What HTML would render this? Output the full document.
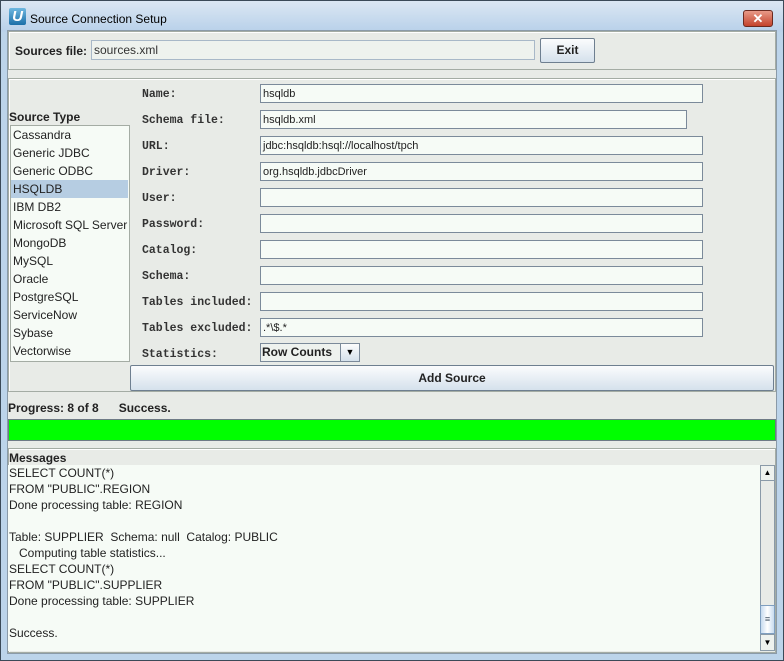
<!DOCTYPE html>
<html><head><style>
*{margin:0;padding:0;box-sizing:border-box}
body{width:784px;height:661px;position:relative;overflow:hidden;background:#bcd4ea;font-family:"Liberation Sans",sans-serif;font-size:12px;color:#000}
.a{position:absolute}
.frame{left:0;top:0;width:784px;height:661px;border:1px solid #3b4a58;background:linear-gradient(#dbe7f3,#b9d1ea 30px,#bcd4ea 31px)}
.content{left:7px;top:30px;width:770px;height:624px;background:#e8ebe7;border:1px solid #8a9aa8}
.lbl{font-family:"Liberation Mono","DejaVu Sans Mono",monospace;font-weight:bold;font-size:11.5px;color:#333}
.fld{background:#f6fbf6;border:1px solid #7b8a9a;height:19px;font-size:11px;padding-left:2px;line-height:18px;color:#222}
.grp{border:1px solid #a4aca4;box-shadow:inset 1px 1px #fff}
.btn{border:1px solid #6e7f90;border-radius:2px;background:linear-gradient(#fbfcfd,#d5e1ec);font-weight:bold;text-align:center;color:#222}
.li{left:13px;font-size:12px;color:#222;height:18px;line-height:19px}
.msg{left:9px;font-size:12px;color:#222}
</style></head><body>
<div class="a frame"></div>
<div class="a" style="left:9px;top:8px;width:17px;height:17px;background:linear-gradient(#6fb8e0,#1b6fa8);border-radius:2px;color:#fff;font-weight:bold;font-style:italic;font-size:15px;line-height:17px;text-align:center">U</div>
<div class="a" style="left:30px;top:12px;font-size:12px">Source Connection Setup</div>
<div class="a" style="left:743px;top:10px;width:30px;height:17px;border:1px solid #6b2a20;border-radius:3px;background:linear-gradient(#e89a88,#c4432c);color:#fff;font-weight:bold;text-align:center;line-height:15px;font-size:13px">✕</div>
<div class="a content"></div>
<div class="a grp" style="left:8px;top:31px;width:768px;height:39px"></div>
<div class="a" style="left:15px;top:44px;font-weight:bold;color:#222">Sources file:</div>
<div class="a fld" style="left:91px;top:40px;width:444px;height:20px;font-size:12px;background:#eef2ee;border-color:#a8b8c8;color:#333;line-height:19px">sources.xml</div>
<div class="a btn" style="left:540px;top:38px;width:55px;height:25px;line-height:23px">Exit</div>
<div class="a grp" style="left:8px;top:78px;width:768px;height:314px"></div>
<div class="a" style="left:9px;top:110px;font-weight:bold;color:#222">Source Type</div>
<div class="a" style="left:10px;top:125px;width:120px;height:237px;background:#f6fbf6;border:1px solid #a4aca4"></div>
<div class="a" style="left:11px;top:180px;width:117px;height:18px;background:#b6cde2"></div>
<div class="a li" style="top:126px">Cassandra</div>
<div class="a li" style="top:144px">Generic JDBC</div>
<div class="a li" style="top:162px">Generic ODBC</div>
<div class="a li" style="top:180px">HSQLDB</div>
<div class="a li" style="top:198px">IBM DB2</div>
<div class="a li" style="top:216px">Microsoft SQL Server</div>
<div class="a li" style="top:234px">MongoDB</div>
<div class="a li" style="top:252px">MySQL</div>
<div class="a li" style="top:270px">Oracle</div>
<div class="a li" style="top:288px">PostgreSQL</div>
<div class="a li" style="top:306px">ServiceNow</div>
<div class="a li" style="top:324px">Sybase</div>
<div class="a li" style="top:342px">Vectorwise</div>

<div class="a lbl" style="left:142px;top:88px">Name:</div>
<div class="a fld" style="left:260px;top:84px;width:443px">hsqldb</div>
<div class="a lbl" style="left:142px;top:114px">Schema file:</div>
<div class="a fld" style="left:260px;top:110px;width:427px">hsqldb.xml</div>
<div class="a lbl" style="left:142px;top:140px">URL:</div>
<div class="a fld" style="left:260px;top:136px;width:443px">jdbc:hsqldb:hsql://localhost/tpch</div>
<div class="a lbl" style="left:142px;top:166px">Driver:</div>
<div class="a fld" style="left:260px;top:162px;width:443px">org.hsqldb.jdbcDriver</div>
<div class="a lbl" style="left:142px;top:192px">User:</div>
<div class="a fld" style="left:260px;top:188px;width:443px"></div>
<div class="a lbl" style="left:142px;top:218px">Password:</div>
<div class="a fld" style="left:260px;top:214px;width:443px"></div>
<div class="a lbl" style="left:142px;top:244px">Catalog:</div>
<div class="a fld" style="left:260px;top:240px;width:443px"></div>
<div class="a lbl" style="left:142px;top:270px">Schema:</div>
<div class="a fld" style="left:260px;top:266px;width:443px"></div>
<div class="a lbl" style="left:142px;top:296px">Tables included:</div>
<div class="a fld" style="left:260px;top:292px;width:443px"></div>
<div class="a lbl" style="left:142px;top:322px">Tables excluded:</div>
<div class="a fld" style="left:260px;top:318px;width:443px">.*\$.*</div>
<div class="a lbl" style="left:142px;top:348px">Statistics:</div>
<div class="a" style="left:260px;top:343px;width:100px;height:19px;border:1px solid #7b8a9a;background:#eef2ee"></div>
<div class="a" style="left:262px;top:345px;font-weight:bold;color:#222">Row Counts</div>
<div class="a" style="left:340px;top:344px;width:19px;height:17px;border-left:1px solid #7b8a9a;background:linear-gradient(#fbfcfd,#d5e1ec);text-align:center;font-size:9px;line-height:17px">▼</div>
<div class="a btn" style="left:130px;top:365px;width:644px;height:26px;line-height:25px">Add Source</div>

<div class="a" style="left:8px;top:401px;font-weight:bold;color:#222">Progress: 8 of 8&nbsp;&nbsp;&nbsp;&nbsp;&nbsp;&nbsp;Success.</div>
<div class="a" style="left:8px;top:419px;width:768px;height:22px;border:1px solid #6e7a86;background:#00ff00"></div>
<div class="a grp" style="left:8px;top:448px;width:768px;height:205px"></div>
<div class="a" style="left:9px;top:451px;font-weight:bold;color:#222">Messages</div>
<div class="a" style="left:8px;top:465px;width:752px;height:186px;background:#f6fbf6"></div>
<div class="a msg" style="top:466px">SELECT COUNT(*)</div>
<div class="a msg" style="top:482px">FROM "PUBLIC".REGION</div>
<div class="a msg" style="top:498px">Done processing table: REGION</div>
<div class="a msg" style="top:530px">Table: SUPPLIER&nbsp; Schema: null&nbsp; Catalog: PUBLIC</div>
<div class="a msg" style="top:546px">&nbsp;&nbsp; Computing table statistics...</div>
<div class="a msg" style="top:562px">SELECT COUNT(*)</div>
<div class="a msg" style="top:578px">FROM "PUBLIC".SUPPLIER</div>
<div class="a msg" style="top:594px">Done processing table: SUPPLIER</div>
<div class="a msg" style="top:626px">Success.</div>
<div class="a" style="left:760px;top:465px;width:15px;height:186px;background:#e8ebe7;border:1px solid #8a9aa8"></div>
<div class="a" style="left:760px;top:465px;width:15px;height:16px;border:1px solid #8a9aa8;background:#eef2ee;font-size:8px;text-align:center;line-height:14px">▲</div>
<div class="a" style="left:760px;top:605px;width:15px;height:29px;border:1px solid #7f9fc0;background:linear-gradient(90deg,#c7dbef,#fff,#c7dbef);font-size:9px;text-align:center;line-height:27px;color:#456">≡</div>
<div class="a" style="left:760px;top:634px;width:15px;height:17px;border:1px solid #8a9aa8;background:#eef2ee;font-size:8px;text-align:center;line-height:15px">▼</div>
</body></html>
